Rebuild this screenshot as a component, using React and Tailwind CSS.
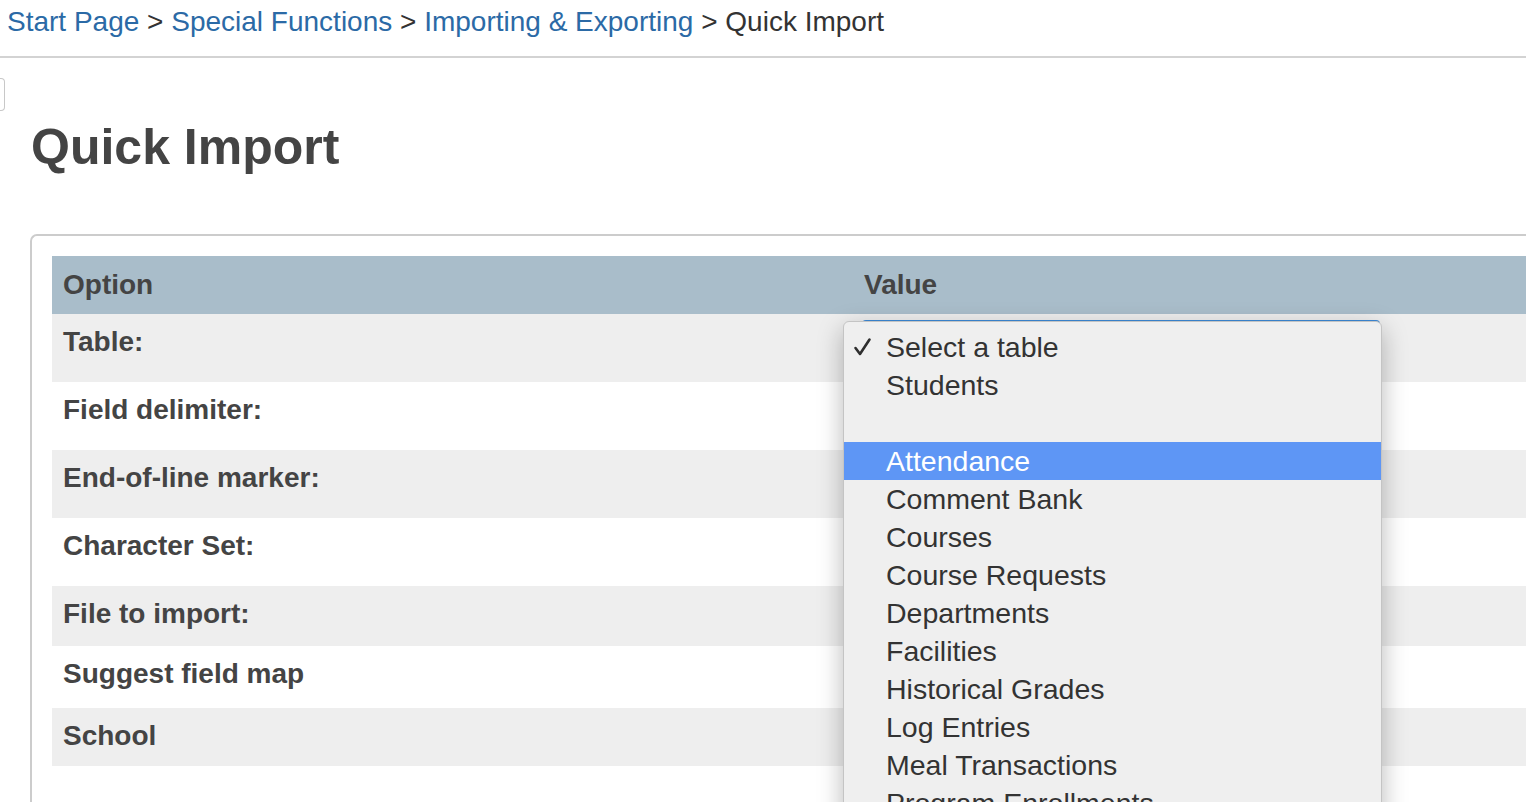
const TABLES = [
  { label: 'Select a table', checked: true },
  { label: 'Students' },
  { label: '', separator: true },
  { label: 'Attendance', active: true },
  { label: 'Comment Bank' },
  { label: 'Courses' },
  { label: 'Course Requests' },
  { label: 'Departments' },
  { label: 'Facilities' },
  { label: 'Historical Grades' },
  { label: 'Log Entries' },
  { label: 'Meal Transactions' },
  { label: 'Program Enrollments' },
  { label: 'Reenrollments' },
]

const ROWS = [
  { label: 'Table:', h: 'h-[68px]', bg: 'bg-[#eeeeee]', select: true },
  { label: 'Field delimiter:', h: 'h-[68px]', bg: 'bg-white' },
  { label: 'End-of-line marker:', h: 'h-[68px]', bg: 'bg-[#eeeeee]' },
  { label: 'Character Set:', h: 'h-[68px]', bg: 'bg-white' },
  { label: 'File to import:', h: 'h-[60px]', bg: 'bg-[#eeeeee]' },
  { label: 'Suggest field map', h: 'h-[62px]', bg: 'bg-white' },
  { label: 'School', h: 'h-[58px]', bg: 'bg-[#eeeeee]' },
]

function Check() {
  return (
    <svg width="20" height="20" viewBox="0 0 20 20" className="shrink-0">
      <path d="M2.5 11 L7 17 L16.5 2.5" fill="none" stroke="#2f2f2f" strokeWidth="2.6" strokeLinecap="round" strokeLinejoin="round" />
    </svg>
  )
}

function TablePopup() {
  return (
    <div className="absolute left-[-10px] top-[7px] z-10 w-[539px] h-[560px] overflow-hidden rounded-t-[6px] border border-[#c4c4c4] bg-[#efefef] pt-[6px] shadow-[0_8px_26px_rgba(0,0,0,0.28)]">
      {TABLES.map((t, i) => (
        <div
          key={i}
          className={`flex h-[38px] items-center text-[28.5px] leading-[38px] ${t.active ? 'bg-[#5e96f5] text-white' : 'text-[#333333]'}`}
        >
          <div className="flex w-[42px] justify-start pl-[9px]">{t.checked && <Check />}</div>
          <span>{t.label}</span>
        </div>
      ))}
    </div>
  )
}

export default function App() {
  return (
    <div className="h-screen w-full overflow-hidden bg-white font-['Liberation_Sans',Arial,sans-serif] text-[#444444]">
      <div className="h-[56px] pl-[7px] pt-[2px] text-[28px] leading-[40px] text-[#333333] whitespace-nowrap">
        <span className="text-[#2b6aa6]">Start Page</span> &gt;{' '}
        <span className="text-[#2b6aa6]">Special Functions</span> &gt;{' '}
        <span className="text-[#2b6aa6]">Importing &amp; Exporting</span> &gt; Quick Import
      </div>
      <div className="h-[2px] w-full bg-[#d3d3d3]" />

      <div className="mt-[20px] h-[33px] w-[5px] rounded-r-[4px] border border-l-0 border-[#c8c8c8]" />

      <h1 className="mt-[6px] pl-[31px] text-[50px] font-bold leading-[60px] text-[#444444]">Quick Import</h1>

      <div className="ml-[30px] mt-[57px] w-[1600px] rounded-tl-[7px] border-2 border-r-0 border-b-0 border-[#cccccc] pl-[20px] pt-[20px]">
        <div className="flex h-[58px] items-center bg-[#a9bdca] text-[28px] font-bold">
          <div className="w-[801px] pl-[11px]">Option</div>
          <div className="pl-[11px]">Value</div>
        </div>
        {ROWS.map((r) => (
          <div key={r.label} className={`flex ${r.h} ${r.bg}`}>
            <div className="w-[801px] pl-[11px] pt-[8px] text-[28px] font-bold leading-[40px] whitespace-nowrap">{r.label}</div>
            <div className="relative flex-1">
              {r.select && (
                <>
                  <div className="ml-[9px] mt-[6px] h-[42px] w-[518px] rounded-[4px] border-2 border-[#3d8ad8] bg-white" />
                  <TablePopup />
                </>
              )}
            </div>
          </div>
        ))}
        <div className="h-[60px]" />
      </div>
    </div>
  )
}
